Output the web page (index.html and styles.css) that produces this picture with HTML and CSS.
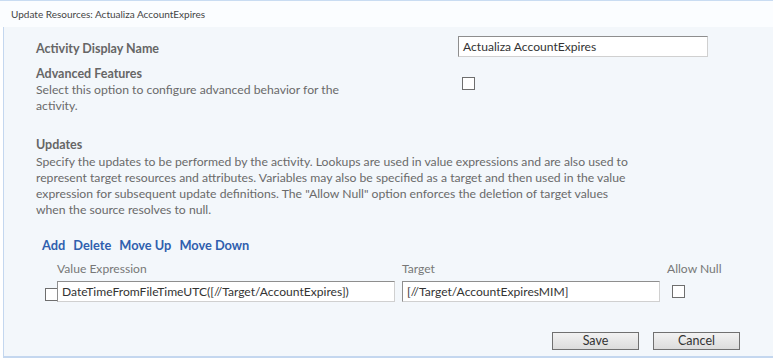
FILE: index.html
```html
<!DOCTYPE html>
<html>
<head>
<meta charset="utf-8">
<link rel="stylesheet" href="styles.css">
</head>
<body>
<div class="frame">
  <div class="title">Update Resources: Actualiza AccountExpires</div>
  <div class="panel">
    <div class="field">
      <div class="label-col"><div class="label first">Activity Display Name</div></div>
      <div class="control-col"><div class="textbox name-box">Actualiza AccountExpires</div></div>
    </div>
    <div class="field adv">
      <div class="label-col">
        <div class="label adv-label">Advanced Features</div>
        <div class="desc narrow">Select this option to configure advanced behavior for the activity.</div>
      </div>
      <div class="control-col"><div class="checkbox adv-check"></div></div>
    </div>
    <div class="updates">
      <div class="label">Updates</div>
      <div class="desc wide">Specify the updates to be performed by the activity. Lookups are used in value expressions and are also used to represent target resources and attributes. Variables may also be specified as a target and then used in the value expression for subsequent update definitions. The "Allow Null" option enforces the deletion of target values when the source resolves to null.</div>
    </div>
    <div class="links">
      <span class="link">Add</span>
      <span class="link">Delete</span>
      <span class="link">Move Up</span>
      <span class="link">Move Down</span>
    </div>
    <div class="grid">
      <div class="h h-sel"></div>
      <div class="h">Value Expression</div>
      <div class="h">Target</div>
      <div class="h">Allow Null</div>
      <div class="cell sel-cell"><div class="checkbox"></div></div>
      <div class="cell"><div class="textbox expr-box">DateTimeFromFileTimeUTC([//Target/AccountExpires])</div></div>
      <div class="cell"><div class="textbox target-box">[//Target/AccountExpiresMIM]</div></div>
      <div class="cell null-cell"><div class="checkbox"></div></div>
    </div>
    <div class="buttons">
      <div class="btn">Save</div>
      <div class="btn">Cancel</div>
    </div>
  </div>
</div>
</body>
</html>
```

FILE: styles.css
```css
html, body {
  margin: 0;
  padding: 0;
  background: #ffffff;
}
body {
  font-family: Lato, "Open Sans", sans-serif;
  color: #666666;
  width: 773px;
  height: 362px;
  overflow: hidden;
}
.frame {
  height: 358px;
  border-top: 1px solid #c9dcf2;
  box-sizing: border-box;
}
.title {
  height: 26px;
  line-height: 26px;
  padding-left: 11px;
  font-size: 10px;
  color: #444444;
  background: #fbfdff;
}
.panel {
  margin-left: 3px;
  border-left: 1px solid #c4d7ef;
  border-bottom: 2px solid #c4d7ef;
  background: #f3f7fb;
  height: 331px;
  box-sizing: border-box;
  padding-left: 32px;
  padding-top: 11px;
}
.field {
  display: grid;
  grid-template-columns: 422px 250px;
}
.label {
  font-weight: bold;
  font-size: 12.5px;
  line-height: 18px;
  color: #666666;
}
.label.first { margin-top: 2px; }
.adv-label { line-height: 16px; }
.desc {
  font-size: 12.2px;
  line-height: 16px;
  color: #6a6a6a;
}
.narrow { width: 316px; }
.wide { width: 596px; }
.textbox {
  height: 21px;
  box-sizing: border-box;
  background: #ffffff;
  border: 1px solid #d0d0d0;
  border-top-color: #8e8e8e;
  border-left-color: #8e8e8e;
  font-size: 12.1px;
  line-height: 19px;
  padding-left: 4px;
  color: #333333;
  white-space: nowrap;
  overflow: hidden;
}
.name-box { width: 250px; margin-top: -2px; }
.adv { margin-top: 8px; }
.checkbox {
  width: 13px;
  height: 13px;
  box-sizing: border-box;
  border: 1px solid #6e6e6e;
  background: #ffffff;
}
.adv-check { margin-left: 4px; margin-top: 11px; }
.updates { margin-top: 22px; }
.links {
  margin-top: 19px;
  margin-left: 6px;
  display: flex;
  gap: 8px;
  font-size: 12.8px;
  font-weight: bold;
  color: #2f5fae;
  line-height: 16px;
}
.grid {
  margin-top: 8px;
  margin-left: 9px;
  display: grid;
  grid-template-columns: 12px 345px 265px 80px;
  row-gap: 4px;
}
.h {
  font-size: 12.1px;
  color: #777777;
  line-height: 16px;
  white-space: nowrap;
}
.expr-box { width: 338px; }
.target-box { width: 258px; }
.sel-cell .checkbox { margin-top: 7px; }
.null-cell .checkbox { margin-top: 4px; margin-left: 5px; }
.buttons {
  margin-top: 30px;
  margin-left: 516px;
  display: flex;
  gap: 14px;
}
.btn {
  width: 87px;
  height: 18px;
  box-sizing: border-box;
  border: 1px solid #707070;
  background: linear-gradient(#f2f2f2, #dcdcdc);
  font-size: 12.5px;
  line-height: 16px;
  text-align: center;
  color: #333333;
}
```
